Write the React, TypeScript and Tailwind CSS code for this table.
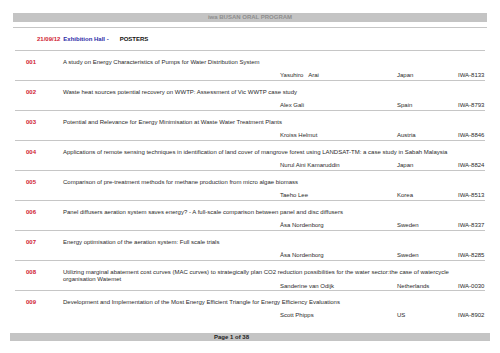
import React from "react";

type Row = {
  no: string;
  title: string[];
  name: string;
  country: string;
  code: string;
};

const rows: Row[] = [
  { no: "001", title: ["A study on Energy Characteristics of Pumps for Water Distribution System"], name: "Yasuhiro\u00a0\u00a0\u00a0Arai", country: "Japan", code: "IWA-8133" },
  { no: "002", title: ["Waste heat sources potential recovery on WWTP: Assessment of Vic WWTP case study"], name: "Alex Gali", country: "Spain", code: "IWA-8793" },
  { no: "003", title: ["Potential and Relevance for Energy Minimisation at Waste Water Treatment Plants"], name: "Kroiss Helmut", country: "Austria", code: "IWA-8846" },
  { no: "004", title: ["Applications of remote sensing techniques in identification of land cover of mangrove forest using LANDSAT-TM: a case study in Sabah Malaysia"], name: "Nurul Aini Kamaruddin", country: "Japan", code: "IWA-8824" },
  { no: "005", title: ["Comparison of pre-treatment methods for methane production from micro algae biomass"], name: "Taeho Lee", country: "Korea", code: "IWA-8513" },
  { no: "006", title: ["Panel diffusers aeration system saves energy? - A full-scale comparison between panel and disc diffusers"], name: "Åsa Nordenborg", country: "Sweden", code: "IWA-8337" },
  { no: "007", title: ["Energy optimisation of the aeration system: Full scale trials"], name: "Åsa Nordenborg", country: "Sweden", code: "IWA-8285" },
  { no: "008", title: ["Utilizing marginal abatement cost curves (MAC curves) to strategically plan CO2 reduction possibilities for the water sector:the case of watercycle", "organisation Watemet"], name: "Sanderine van Odijk", country: "Netherlands", code: "IWA-0030" },
  { no: "009", title: ["Development and Implementation of the Most Energy Efficient Triangle for Energy Efficiency Evaluations"], name: "Scott Phipps", country: "US", code: "IWA-8902" },
];

export default function App() {
  return (
    <div className="w-[500px] h-[353px] bg-white overflow-hidden pt-[13px] font-['Liberation_Sans',Arial,sans-serif] text-[6px] leading-[7px] text-[#2a2a2a]">
      <div className="mx-[13px] h-[9px] bg-[#c4c4c4] flex items-center justify-center font-bold text-[#8e8e8e]">
        iwa BUSAN ORAL PROGRAM
      </div>
      <div className="mx-[13px] mt-[5px] h-px bg-[#c6c6c6]" />
      <div className="h-[22px] flex items-center pl-[37px] font-bold">
        <span className="text-[#d02030]">21/09/12</span>
        <span className="ml-[3px] text-[#2c2ca8]">Exhibition Hall -</span>
        <span className="ml-[11px] text-[#111]">POSTERS</span>
      </div>
      <div className="mx-[15px]">
        {rows.map((r) => (
          <div key={r.no} className="border-t border-[#c6c6c6] h-[30px] flex flex-col pt-[8px]">
            <div className="flex">
              <div className="w-[48px] pl-[11px] text-[#d02030] font-bold">{r.no}</div>
              <div>
                {r.title.map((t, i) => (
                  <div key={i} className="whitespace-nowrap">{t}</div>
                ))}
              </div>
            </div>
            <div className="mt-auto mb-[1px] flex pl-[265px]">
              <div className="w-[117px]">{r.name}</div>
              <div className="w-[61px]">{r.country}</div>
              <div>{r.code}</div>
            </div>
          </div>
        ))}
      </div>
      <div className="mt-[13px] mx-[10px] h-[8px] bg-[#c4c4c4] flex items-center pl-[204px] text-[#222] font-bold">
        Page 1 of 38
      </div>
    </div>
  );
}
